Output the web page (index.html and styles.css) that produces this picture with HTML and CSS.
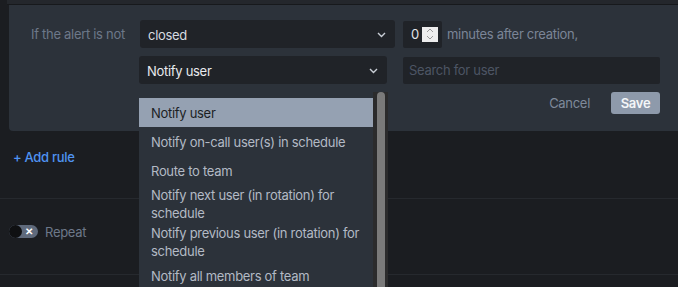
FILE: index.html
```html
<!DOCTYPE html>
<html>
<head>
<meta charset="utf-8">
<link rel="stylesheet" href="styles.css">
</head>
<body>
<div class="topbar"></div>
<div class="panel">
  <div class="label">If the alert is not</div>
  <div class="body">
    <div class="row">
      <div class="select s1"><span>closed</span><svg class="chev" width="9" height="6" viewBox="0 0 9 6"><path d="M1 1l3.5 3.5L8 1" fill="none" stroke="#c9ced6" stroke-width="1.4"/></svg></div>
      <div class="num"><span>0</span><div class="spin"><svg width="10" height="14" viewBox="0 0 10 14"><path d="M2 5l3-3 3 3M2 9l3 3 3-3" fill="none" stroke="#9a9a9a" stroke-width="1"/></svg></div></div>
      <div class="after">minutes after creation,</div>
    </div>
    <div class="row">
      <div class="select s2"><span class="bright">Notify user</span><svg class="chev" width="9" height="6" viewBox="0 0 9 6"><path d="M1 1l3.5 3.5L8 1" fill="none" stroke="#c9ced6" stroke-width="1.4"/></svg></div>
      <div class="search">Search for user</div>
    </div>
    <div class="actions">
      <span class="cancel">Cancel</span>
      <span class="save">Save</span>
    </div>
  </div>
</div>
<div class="addrule">+ Add rule</div>
<div class="sep"></div>
<div class="repeat">
  <div class="toggle"><span class="knob"></span><span class="x">✕</span></div>
  <span class="rlabel">Repeat</span>
</div>
<div class="sep last"></div>

<div class="menu">
  <div class="items">
    <div class="item active">Notify user</div>
    <div class="item">Notify on-call user(s) in schedule</div>
    <div class="item">Route to team</div>
    <div class="item">Notify next user (in rotation) for schedule</div>
    <div class="item">Notify previous user (in rotation) for schedule</div>
    <div class="item">Notify all members of team</div>
  </div>
  <div class="scroll"><div class="thumb"></div></div>
</div>
</body>
</html>
```

FILE: styles.css
```css
* { box-sizing: border-box; }
html, body { margin: 0; padding: 0; }
body {
  background: #1b1d21;
  width: 678px;
  height: 287px;
  overflow: hidden;
  font-family: Inter, "Liberation Sans", sans-serif;
  font-size: 13px;
  letter-spacing: -0.3px;
  color: #c5cbd3;
  position: relative;
}
.topbar {
  height: 5px;
  margin-left: 7px;
  background: #24272c;
  border-bottom: 1px solid #17191c;
}
.panel {
  margin-left: 9px;
  height: 126px;
  background: #2c323a;
  border-radius: 0 0 0 4px;
  display: flex;
  padding: 15px 18px 0 0;
}
.label {
  width: 131px;
  padding-left: 22px;
  line-height: 29px;
  color: #6d7889;
  white-space: nowrap;
}
.body {
  flex: 1;
  display: flex;
  flex-direction: column;
  gap: 8px;
}
.row {
  display: flex;
  align-items: center;
}
.select {
  height: 28px;
  background: #202328;
  border-radius: 3px;
  display: flex;
  align-items: center;
  justify-content: space-between;
  padding: 1px 9px 0 8px;
  color: #d7dbe1;
}
.select .bright { color: #e8eaee; }
.s1 { width: 255px; }
.s2 { width: 248px; margin-left: -1px; }
.num {
  margin-left: 8px;
  width: 39px;
  height: 27px;
  background: #202328;
  border-radius: 2px;
  display: flex;
  align-items: center;
  padding-left: 8px;
  color: #e2e5ea;
}
.spin {
  margin-left: 3px;
  width: 16px;
  height: 15px;
  background: #ededed;
  display: flex;
  align-items: center;
  justify-content: center;
}
.after {
  margin-left: 5px;
  color: #7b8597;
  white-space: nowrap;
}
.search {
  margin-left: 16px;
  flex: 1;
  height: 27px;
  background: #202328;
  border-radius: 2px;
  display: flex;
  align-items: center;
  padding-left: 6px;
  color: #4d5564;
}
.actions {
  display: flex;
  justify-content: flex-end;
  align-items: center;
}
.cancel {
  color: #7f8a9b;
  margin-right: 21px;
}
.save {
  background: #8e9aab;
  color: #f4f6f8;
  font-weight: 600;
  height: 22px;
  width: 49px;
  border-radius: 3px;
  display: flex;
  align-items: center;
  justify-content: center;
}
.addrule {
  margin: 17px 0 0 13px;
  color: #4f93f2;
  font-weight: 500;
  line-height: 18px;
  height: 18px;
}
.sep {
  margin-top: 32px;
  height: 1px;
  background: #26292e;
}
.sep.last { margin-top: 0; }
.repeat {
  height: 75px;
  display: flex;
  align-items: center;
  padding: 0 0 10px 9px;
}
.toggle {
  width: 29px;
  height: 13px;
  border-radius: 7px;
  background: #5f6a7c;
  display: flex;
  align-items: center;
}
.knob {
  width: 13px;
  height: 13px;
  border-radius: 50%;
  background: #0f1012;
}
.x {
  color: #fff;
  font-size: 10px;
  font-weight: 700;
  margin-left: 3px;
  line-height: 13px;
}
.rlabel {
  margin-left: 7px;
  color: #6d7889;
}
.menu {
  position: absolute;
  left: 139px;
  top: 92px;
  width: 249px;
  height: 200px;
  display: flex;
  background: #2c323a;
}
.items {
  width: 234px;
  padding-top: 6px;
}
.item {
  min-height: 29px;
  padding: 1px 12px;
  line-height: 18px;
  display: flex;
  align-items: center;
  color: #b3bac5;
}
.item.active {
  background: #95a1b2;
  color: #1c1f24;
}
.scroll {
  width: 15px;
  background: #2b2b2c;
  padding: 0 3px 0 4px;
}
.thumb {
  height: 100%;
  background: #7a7a7a;
  border-radius: 4px;
}
```
